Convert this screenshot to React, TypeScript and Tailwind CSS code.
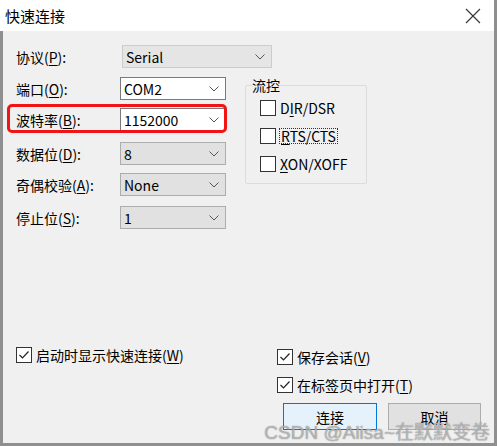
import type { ReactNode } from "react";

const font = "font-['Noto_Sans_CJK_SC','Noto_Sans',sans-serif]";

const Chevron = () => (
  <svg width="10" height="6" viewBox="0 0 10 6" className="shrink-0">
    <path d="M0.5 0.5 L5 5 L9.5 0.5" fill="none" stroke="#555" strokeWidth="1" />
  </svg>
);

interface SelectProps {
  value: string;
  variant: "disabled" | "edit" | "button";
  width: string;
}

const Select = ({ value, variant, width }: SelectProps) => {
  const tone =
    variant === "disabled"
      ? "bg-[#e5e5e5] border-[#cccccc]"
      : variant === "edit"
        ? "bg-white border-[#7a7a7a]"
        : "bg-[#e1e1e1] border-[#adadad]";
  return (
    <div
      className={`flex h-[23px] shrink-0 items-center justify-between border pl-[3px] pr-[6px] text-[14px] leading-none ${tone} ${width}`}
    >
      <span>{value}</span>
      <Chevron />
    </div>
  );
};

const Acc = ({ k }: { k: string }) => <span className="underline underline-offset-2">{k}</span>;

interface RowProps {
  label: ReactNode;
  children: ReactNode;
  className?: string;
}

const Row = ({ label, children, className = "" }: RowProps) => (
  <div className={`relative flex items-center ${className}`}>
    <div className="w-[117px] shrink-0 pl-[13px] text-[14px] leading-none">{label}</div>
    {children}
  </div>
);

const Box = ({ checked = false }: { checked?: boolean }) => (
  <div className="flex h-4 w-4 shrink-0 items-center justify-center border border-[#333] bg-white">
    {checked && (
      <svg width="14" height="14" viewBox="0 0 14 14">
        <path d="M2.5 7 L5.5 10 L11.5 3.5" fill="none" stroke="#222" strokeWidth="1.2" />
      </svg>
    )}
  </div>
);

const Check = ({ checked, children, focus = false }: { checked?: boolean; children: ReactNode; focus?: boolean }) => (
  <div className="flex items-center gap-[4px] text-[14px] leading-none">
    <Box checked={checked} />
    <span className={focus ? "outline outline-1 outline-dotted outline-[#333] px-[1px]" : ""}>{children}</span>
  </div>
);

export default function App() {
  return (
    <div className={`relative flex h-[446px] w-[497px] flex-col border-r-[3px] border-[#8f8f8f] bg-[#f0f0f0] text-black ${font}`}>
      <div className="flex h-[31px] shrink-0 items-center justify-between bg-white pl-[5px] pr-[13px]">
        <span className="text-[15px] leading-none">快速连接</span>
        <svg width="16" height="16" viewBox="0 0 16 16">
          <path d="M1 1 L15 15 M15 1 L1 15" stroke="#333" strokeWidth="1.1" fill="none" />
        </svg>
      </div>

      <div className="flex flex-1 flex-col border-b-[3px] border-l-[3px] border-[#8f8f8f]">
        <div className="flex">
          <div className="flex w-[226px] shrink-0 flex-col">
            <Row label={<>协议(<Acc k="P" />):</>} className="mt-[14px]">
              <div className="ml-[2px] shrink-0">
                <Select value="Serial" variant="disabled" width="w-[150px]" />
              </div>
            </Row>
            <Row label={<>端口(<Acc k="O" />):</>} className="mt-[9px]">
              <Select value="COM2" variant="edit" width="w-[106px]" />
            </Row>
            <Row label={<>波特率(<Acc k="B" />):</>} className="mt-[8px]">
              <Select value="1152000" variant="edit" width="w-[106px]" />
              <div className="pointer-events-none absolute -top-[4px] left-[4px] h-[29px] w-[220px] rounded-[5px] border-[3px] border-[#f01414]" />
            </Row>
            <Row label={<>数据位(<Acc k="D" />):</>} className="mt-[11px]">
              <Select value="8" variant="button" width="w-[106px]" />
            </Row>
            <Row label={<>奇偶校验(<Acc k="A" />):</>} className="mt-[8px]">
              <Select value="None" variant="button" width="w-[106px]" />
            </Row>
            <Row label={<>停止位(<Acc k="S" />):</>} className="mt-[10px]">
              <Select value="1" variant="button" width="w-[106px]" />
            </Row>
          </div>

          <fieldset className="ml-[16px] mt-[45px] h-[108px] w-[122px] rounded-[2px] border border-[#dcdcdc] pl-[14px]">
            <legend className="-ml-[8px] px-0 text-[14px] leading-[18px]">流控</legend>
            <div className="mt-[6px] flex flex-col gap-[12px]">
              <Check>
                D<Acc k="I" />R/DSR
              </Check>
              <Check focus>
                <Acc k="R" />TS/CTS
              </Check>
              <Check>
                <Acc k="X" />ON/XOFF
              </Check>
            </div>
          </fieldset>
        </div>

        <div className="mt-[118px] flex">
          <div className="w-[274px] pl-[13px]">
            <Check checked>
              启动时显示快速连接(<Acc k="W" />)
            </Check>
          </div>
          <div className="flex flex-col">
            <div className="mt-[2px]">
              <Check checked>
                保存会话(<Acc k="V" />)
              </Check>
            </div>
            <div className="mt-[12px]">
              <Check checked>
                在标签页中打开(<Acc k="T" />)
              </Check>
            </div>
            <div className="ml-[6px] mt-[10px] flex gap-[11px]">
              <button className="flex h-[27px] w-[94px] items-center justify-center border border-[#0078d7] bg-[#e5f1fb] text-[14px] leading-none">
                连接
              </button>
              <button className="flex h-[27px] w-[93px] items-center justify-center border border-[#adadad] bg-[#e1e1e1] text-[14px] leading-none">
                取消
              </button>
            </div>
          </div>
        </div>
      </div>

      <div className="pointer-events-none absolute bottom-[4px] right-[4px] font-['Liberation_Sans','Noto_Sans_CJK_SC',sans-serif] text-[19px] leading-none text-white/50 [text-shadow:0_0_1px_#555]">
        CSDN @Alisa~在默默变卷
      </div>
    </div>
  );
}
